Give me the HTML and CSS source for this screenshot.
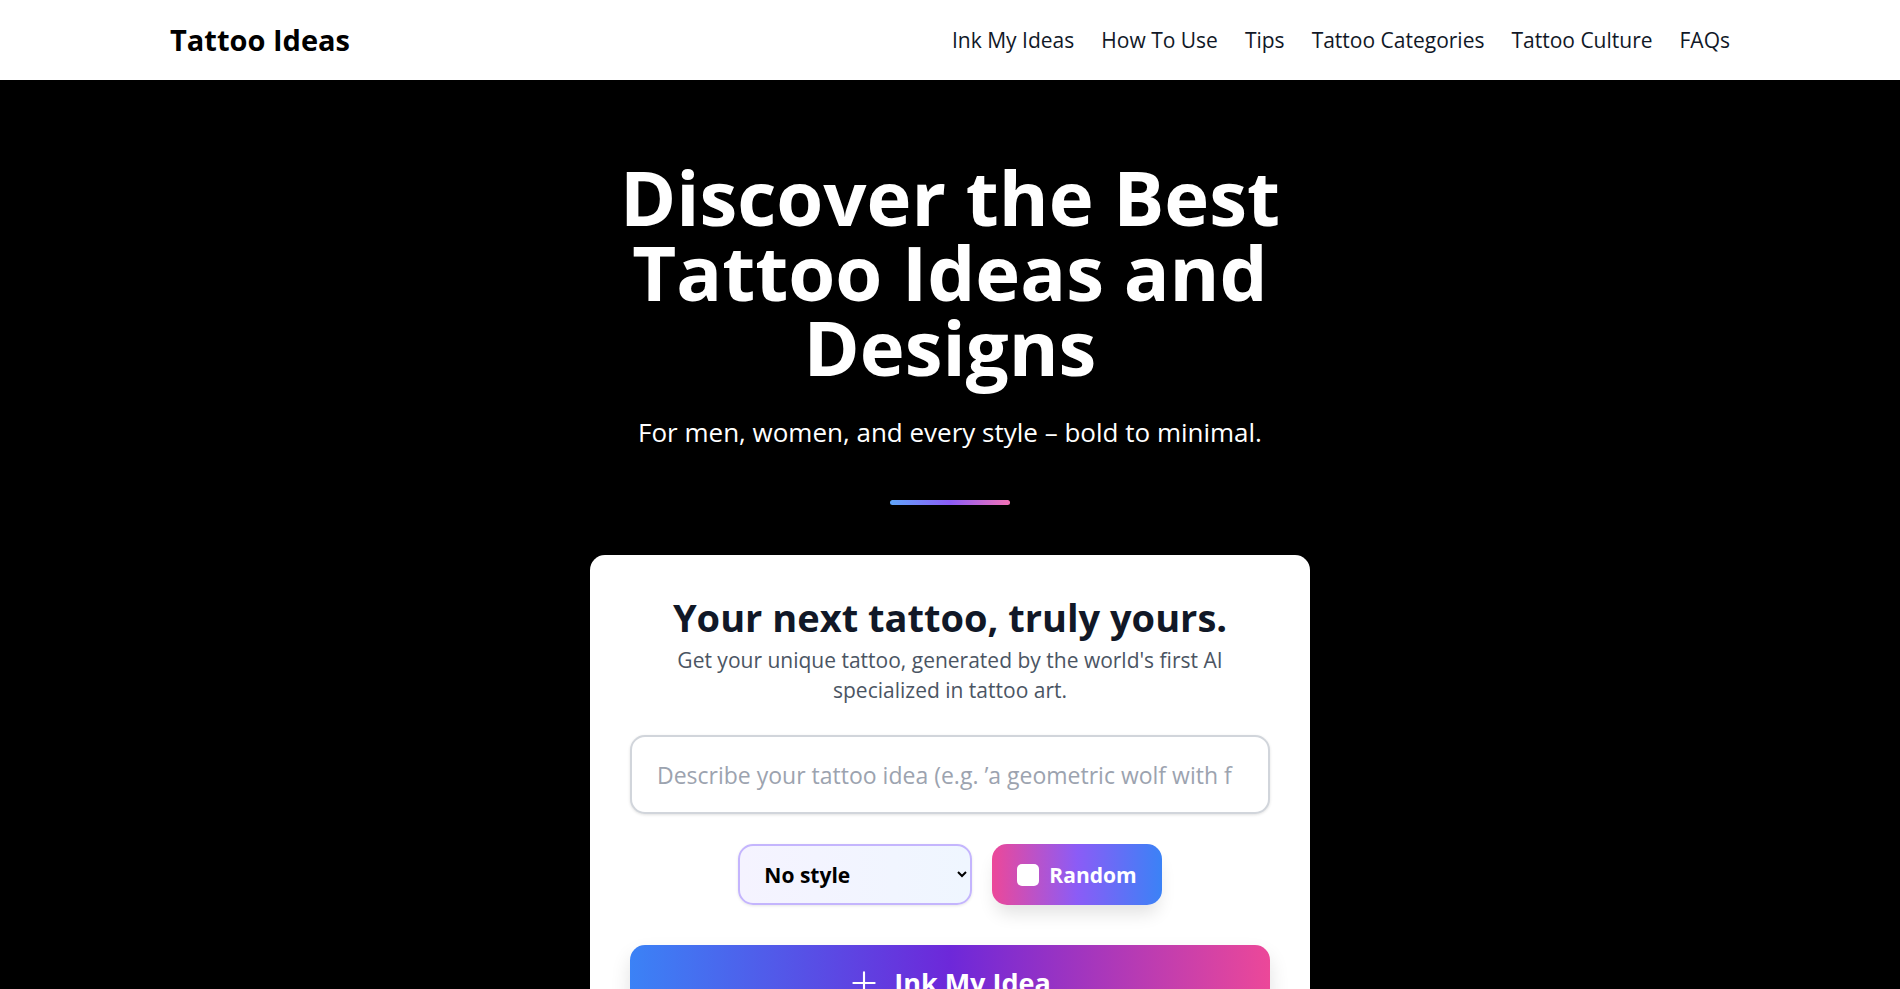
FILE: index.html
```html
<!DOCTYPE html>
<html lang="en">
  <head>
    <meta charset="utf-8" />
    <meta name="viewport" content="width=device-width, initial-scale=1" />
    <title>Tattoo Ideas</title>
    <link rel="stylesheet" href="styles.css">
  </head>
  <body>
    <header class="site-header">
      <div class="header-inner">
        <a class="logo" href="#">Tattoo Ideas</a>
        <nav class="site-nav">
          <a href="#generator">Ink My Ideas</a>
          <a href="#how-to">How To Use</a>
          <a href="#tips">Tips</a>
          <a href="#categories">Tattoo Categories</a>
          <a href="#culture">Tattoo Culture</a>
          <a href="#faqs">FAQs</a>
        </nav>
      </div>
    </header>

    <main class="hero">
      <h1>Discover the Best Tattoo Ideas and Designs</h1>
      <p class="subtitle">For men, women, and every style – bold to minimal.</p>
      <div class="divider"></div>

      <form class="card" id="generator">
        <h2>Your next tattoo, truly yours.</h2>
        <p class="intro">Get your unique tattoo, generated by the world's first AI specialized in tattoo art.</p>

        <input
          class="idea-input"
          type="text"
          aria-label="Tattoo idea"
          placeholder="Describe your tattoo idea (e.g. ’a geometric wolf with f"
        />

        <div class="options">
          <select class="style-select" aria-label="Tattoo style">
            <option>No style</option>
          </select>
          <button class="random-btn" type="button">
            <svg width="22" height="22" viewBox="0 0 22 22" aria-hidden="true">
              <rect width="22" height="22" rx="5" fill="currentColor" />
            </svg>
            Random
          </button>
        </div>

        <button class="submit-btn" type="submit">
          <svg width="30" height="30" viewBox="0 0 24 24" fill="none" stroke="currentColor" stroke-width="1.7" stroke-linecap="round" aria-hidden="true">
            <path d="M12 3.5v17M3.5 12h17" />
          </svg>
          Ink My Idea
        </button>
      </form>
    </main>
  </body>
</html>
```

FILE: styles.css
```css
* {
  box-sizing: border-box;
}
body {
  margin: 0;
  background: #000;
  font-family: "Open Sans", "Noto Sans", sans-serif;
  font-size: 21px;
  line-height: 30px;
}
h1,
h2,
p {
  margin: 0;
}
button,
input,
select {
  font-family: inherit;
}

/* Header */
.site-header {
  background: #fff;
}
.header-inner {
  display: flex;
  align-items: center;
  justify-content: space-between;
  max-width: 1600px;
  height: 80px;
  margin: 0 auto;
  padding: 0 20px;
}
.logo {
  color: #000;
  font-size: 29px;
  font-weight: bold;
  text-decoration: none;
}
.site-nav {
  display: flex;
  gap: 27px;
}
.site-nav a {
  color: #111827;
  text-decoration: none;
}

/* Hero */
.hero {
  display: flex;
  flex-direction: column;
  align-items: center;
  padding: 79px 20px 80px;
  text-align: center;
}
.hero h1 {
  max-width: 720px;
  color: #fff;
  font-size: 76px;
  line-height: 75px;
}
.subtitle {
  margin-top: 31px;
  color: #fff;
  font-size: 26px;
  line-height: 35px;
}
.divider {
  width: 120px;
  height: 5px;
  margin: 50px 0;
  border-radius: 5px;
  background: linear-gradient(to right, #60a5fa, #8b5cf6, #f472b6);
}

/* Generator card */
.card {
  display: flex;
  flex-direction: column;
  width: 100%;
  max-width: 720px;
  padding: 40px;
  border-radius: 15px;
  background: #fff;
}
.card h2 {
  color: #111827;
  font-size: 38px;
  line-height: 44px;
}
.intro {
  padding: 6px 40px 0;
  color: #4b5563;
}
.idea-input {
  width: 100%;
  height: 79px;
  margin-top: 30px;
  padding: 0 25px;
  border: 2px solid #d1d5db;
  border-radius: 15px;
  background: #fff;
  box-shadow: 0 1px 3px rgba(0, 0, 0, 0.12);
  font-size: 23px;
}
.idea-input::placeholder {
  color: #9ca3af;
}
.options {
  display: flex;
  justify-content: center;
  gap: 20px;
  margin: 30px 0 40px;
}
.style-select {
  width: 234px;
  height: 61px;
  padding: 0 0 0 20px;
  border: 2px solid #c4b5fd;
  border-radius: 15px;
  background: linear-gradient(to right, #f5f3ff, #eff6ff);
  box-shadow: 0 1px 3px rgba(0, 0, 0, 0.1);
  color: #000;
  font-size: 21px;
  font-weight: bold;
}
.random-btn,
.submit-btn {
  display: flex;
  align-items: center;
  justify-content: center;
  border: 0;
  border-radius: 15px;
  color: #fff;
  cursor: pointer;
}
.random-btn {
  gap: 10px;
  padding: 0 25px;
  background: linear-gradient(to right, #ec4899, #8b5cf6, #3b82f6);
  box-shadow: 0 12px 18px -4px rgba(0, 0, 0, 0.12);
  font-size: 21px;
  font-weight: bold;
}
.submit-btn {
  gap: 15px;
  height: 75px;
  background: linear-gradient(to right, #3b82f6, #6d28d9, #ec4899);
  box-shadow: 0 10px 20px rgba(0, 0, 0, 0.12);
  font-size: 27px;
  font-weight: bold;
}
```
